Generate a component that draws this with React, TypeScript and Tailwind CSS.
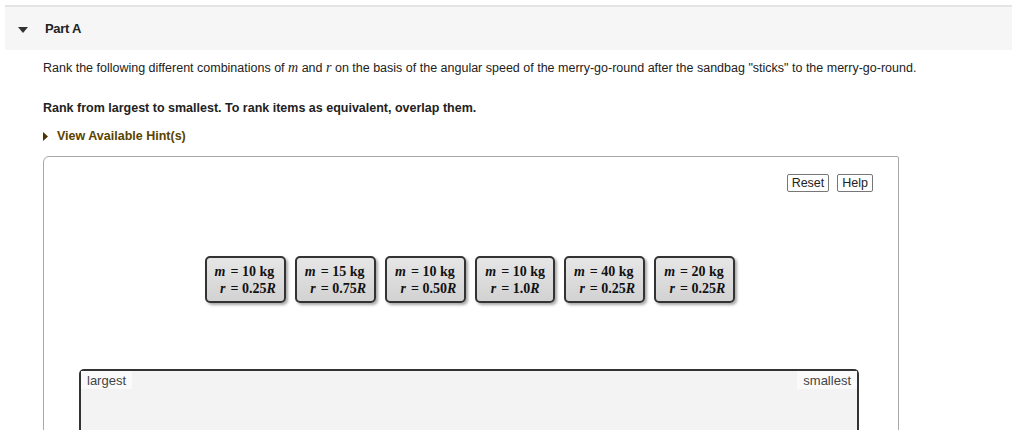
import React from 'react';

interface Combo {
  m: string;
  r: string;
}

const combos: Combo[] = [
  { m: '10', r: '0.25' },
  { m: '15', r: '0.75' },
  { m: '10', r: '0.50' },
  { m: '10', r: '1.0' },
  { m: '40', r: '0.25' },
  { m: '20', r: '0.25' },
];

function ComboCard({ m, r }: Combo) {
  return (
    <div className="rounded-[5px] border-2 border-[#333] bg-gradient-to-b from-[#e6e6e6] to-[#d2d2d2] px-[8px] pt-[5px] pb-[4px] shadow-[2px_2px_3px_rgba(0,0,0,0.35)] font-['Liberation_Serif',serif] text-[14px] font-bold leading-[17px] text-[#111]">
      <div className="grid grid-cols-[auto_auto] gap-x-[5px]">
        <span className="text-right italic">m</span>
        <span>= {m} kg</span>
        <span className="text-right italic">r</span>
        <span>
          = {r}
          <span className="italic">R</span>
        </span>
      </div>
    </div>
  );
}

export default function App() {
  return (
    <div className="h-[430px] w-[1012px] overflow-hidden bg-white font-['Liberation_Sans',Arial,sans-serif] text-[#222]">
      <div className="pl-[5px] pt-[5px]">
        {/* Part header */}
        <div className="flex h-[45px] items-center border-t-2 border-[#e4e4e4] bg-[#f6f6f6] pl-[13px]">
          <svg width="10" height="6" viewBox="0 0 10 6" className="mt-[2px]">
            <polygon points="0,0 10,0 5,6" fill="#333" />
          </svg>
          <span className="ml-[17px] text-[13px] font-bold tracking-[-0.3px] text-[#222]">Part A</span>
        </div>

        <div className="pl-[38px]">
          <p className="mt-[10px] text-[12.5px] leading-[16px] text-[#222]">
            Rank the following different combinations of{' '}
            <span className="font-['Liberation_Serif',serif] text-[14px] italic">m</span> and{' '}
            <span className="font-['Liberation_Serif',serif] text-[14px] italic">r</span> on the basis of the angular
            speed of the merry-go-round after the sandbag "sticks" to the merry-go-round.
          </p>

          <p className="mt-[24px] text-[12.5px] font-bold leading-[16px] text-[#222]">
            Rank from largest to smallest. To rank items as equivalent, overlap them.
          </p>

          <div className="mt-[11px] flex items-center gap-[9px] text-[12.5px] font-bold text-[#5a4300]">
            <svg width="5" height="9" viewBox="0 0 5 9">
              <polygon points="0,0 5,4.5 0,9" fill="#4a3500" />
            </svg>
            <span>View Available Hint(s)</span>
          </div>

          {/* Ranking panel */}
          <div className="mt-[10px] h-[300px] w-[856px] rounded-tl-[6px] rounded-tr-[2px] border border-[#a8a8a8]">
            <div className="flex justify-end gap-[8px] pr-[25px] pt-[17px]">
              <button className="rounded-[2px] border border-[#777] bg-white px-[4px] text-[12.5px] leading-[16px] text-[#222]">
                Reset
              </button>
              <button className="rounded-[2px] border border-[#777] bg-white px-[4px] text-[12.5px] leading-[16px] text-[#222]">
                Help
              </button>
            </div>

            <div className="mt-[64px] flex justify-center gap-[9px] pr-[2px]">
              {combos.map((c, i) => (
                <ComboCard key={i} m={c.m} r={c.r} />
              ))}
            </div>

            <div className="ml-[35px] mt-[66px] h-[80px] w-[780px] rounded-t-[5px] border-2 border-b-0 border-[#333] bg-[#f3f3f3]">
              <div className="flex justify-between text-[13px] leading-[16px] text-[#444]">
                <span className="bg-[#fafafa] px-[6px] pt-[2px]">largest</span>
                <span className="bg-[#fafafa] px-[6px] pt-[2px]">smallest</span>
              </div>
            </div>
          </div>
        </div>
      </div>
    </div>
  );
}
